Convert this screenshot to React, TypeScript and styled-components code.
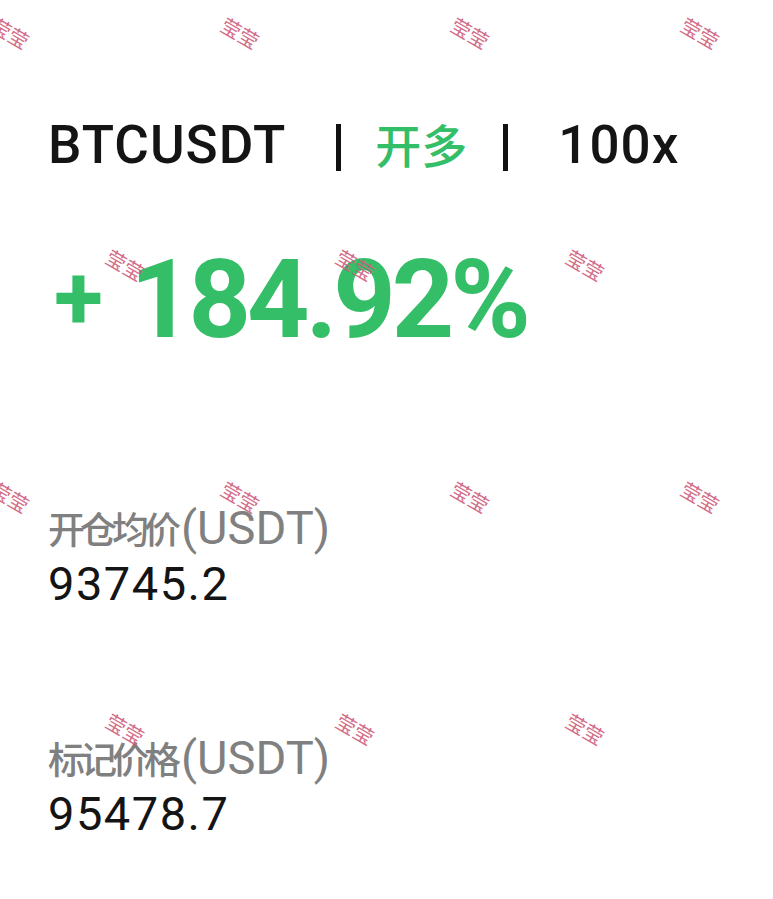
import styled, { createGlobalStyle } from "styled-components";

const GlobalStyle = createGlobalStyle`
  html, body {
    margin: 0;
    padding: 0;
    background: #ffffff;
  }
`;

const GREEN = "#34be68";

const Page = styled.div`
  position: relative;
  width: 773px;
  height: 899px;
  overflow: hidden;
  box-sizing: border-box;
  padding: 115px 0 0 48px;

  display: flex;
  flex-direction: column;

  background: #ffffff;
  font-family: "Roboto", "Noto Sans CJK SC", sans-serif;
  color: #141414;
`;

const HeaderRow = styled.div`
  height: 60px;

  display: flex;
  flex-direction: row;
  align-items: center;
`;

const Symbol = styled.span`
  font-size: 53px;
  line-height: 60px;
  font-weight: 500;
  letter-spacing: 1px;
`;

const Divider = styled.span<{ $before: number; $after: number }>`
  width: 5px;
  height: 47px;
  margin: 4px ${(p) => p.$after}px 0 ${(p) => p.$before}px;
  background: #111111;
`;

const Side = styled.span`
  font-family: "Noto Sans CJK SC", sans-serif;
  font-size: 46px;
  line-height: 60px;
  font-weight: 500;
  color: ${GREEN};
  margin-top: -5px;
`;

const Leverage = styled.span`
  font-size: 53px;
  line-height: 60px;
  font-weight: 500;
  letter-spacing: 1px;
`;

const Profit = styled.div`
  margin: 68px 0 0 6px;

  font-size: 109px;
  line-height: 111px;
  font-weight: 700;
  letter-spacing: -4px;
  color: ${GREEN};
`;

const Sign = styled.span`
  display: inline-block;
  margin-right: 27px;
  font-size: 90px;
  letter-spacing: 0;
  vertical-align: 8px;
`;

const Field = styled.div<{ $gap: number }>`
  margin-top: ${(p) => p.$gap}px;

  display: flex;
  flex-direction: column;
`;

const Label = styled.div`
  font-size: 47px;
  line-height: 56px;
  color: #808080;
`;

const LabelCjk = styled.span`
  font-family: "Noto Sans CJK SC", sans-serif;
  font-size: 37px;
  font-weight: 500;
  letter-spacing: -5px;
  margin-right: 5px;
`;

const Value = styled.div`
  font-size: 47px;
  line-height: 56px;
  letter-spacing: 1.5px;
  color: #141414;
`;

const WatermarkLayer = styled.div`
  position: absolute;
  inset: 0;
  pointer-events: none;
  z-index: 2;
`;

const Mark = styled.span`
  position: absolute;
  transform: translate(-50%, -50%) rotate(30deg);

  font-family: "Noto Sans CJK SC", sans-serif;
  font-size: 20px;
  line-height: 1;
  white-space: nowrap;
  color: #cf5d7c;
  opacity: 0.9;
`;

const markRows = [33, 265, 497, 729];

const marks = markRows.flatMap((y, row) => {
  const start = row % 2 === 0 ? 10 : 125;
  const out: { x: number; y: number }[] = [];
  for (let x = start; x < 773 + 30; x += 230) out.push({ x, y });
  return out;
});

const fields = [
  { cjk: "开仓均价", unit: "(USDT)", value: "93745.2", gap: 144 },
  { cjk: "标记价格", unit: "(USDT)", value: "95478.7", gap: 118 },
];

export default function App() {
  return (
    <>
      <GlobalStyle />
      <Page>
        <HeaderRow>
          <Symbol>BTCUSDT</Symbol>
          <Divider $before={50} $after={34} />
          <Side>开多</Side>
          <Divider $before={36} $after={50} />
          <Leverage>100x</Leverage>
        </HeaderRow>

        <Profit>
          <Sign>+</Sign>
          184.92%
        </Profit>

        {fields.map((f) => (
          <Field key={f.value} $gap={f.gap}>
            <Label>
              <LabelCjk>{f.cjk}</LabelCjk>
              {f.unit}
            </Label>
            <Value>{f.value}</Value>
          </Field>
        ))}

        <WatermarkLayer>
          {marks.map((m, i) => (
            <Mark key={i} style={{ left: m.x, top: m.y }}>
              莹莹
            </Mark>
          ))}
        </WatermarkLayer>
      </Page>
    </>
  );
}
